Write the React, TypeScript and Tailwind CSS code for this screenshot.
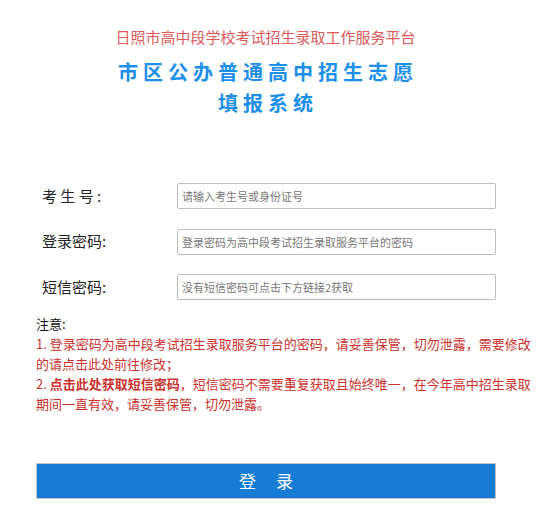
const fields = [
  { label: "考 生 号 :", placeholder: "请输入考生号或身份证号", type: "text" },
  { label: "登录密码:", placeholder: "登录密码为高中段考试招生录取服务平台的密码", type: "password" },
  { label: "短信密码:", placeholder: "没有短信密码可点击下方链接2获取", type: "password" },
];

const App = () => {
  return (
    <div
      className="w-[549px] min-h-[527px] bg-white pl-[36px] pt-[28px]"
      style={{ fontFamily: '"Microsoft YaHei", "Noto Sans CJK SC", sans-serif' }}
    >
      <div className="w-[459px] text-center">
        <div className="text-[15px] leading-[17px] text-[#dc5a5a]">日照市高中段学校考试招生录取工作服务平台</div>
        <div className="mt-[11px] text-[20px] leading-[31px] font-bold tracking-[5px] text-[#1c8fea] pl-[5px]">
          市区公办普通高中招生志愿
          <br />
          填报系统
        </div>
      </div>

      <div className="mt-[65px] flex flex-col gap-[19.5px] w-[460px]">
        {fields.map((f) => (
          <div key={f.label} className="flex items-center">
            <label className="w-[141px] pl-[6px] text-[15px] text-[#222]">{f.label}</label>
            <input
              type={f.type}
              placeholder={f.placeholder}
              className="w-[319px] h-[26px] border border-[#bdbdbd] rounded-[2px] px-[4px] text-[11px] text-[#333] placeholder:text-[#777] outline-none"
            />
          </div>
        ))}
      </div>

      <div className="mt-[14px] w-[502px] text-[13px] leading-[20px]">
        <div className="text-[#111]">注意:</div>
        <div className="text-[#c8312c]">
          1. 登录密码为高中段考试招生录取服务平台的密码，请妥善保管，切勿泄露，需要修改的请点击此处前往修改；
        </div>
        <div className="text-[#c8312c]">
          2. <span className="font-bold cursor-pointer">点击此处获取短信密码</span>，短信密码不需要重复获取且始终唯一，在今年高中招生录取期间一直有效，请妥善保管，切勿泄露。
        </div>
      </div>

      <button className="mt-[49px] w-[460px] h-[36px] bg-[#177cd6] border border-[#c4c4c4] text-white text-[17px] tracking-[8px] pl-[8px]">
        登 录
      </button>
    </div>
  );
};

export default App;
